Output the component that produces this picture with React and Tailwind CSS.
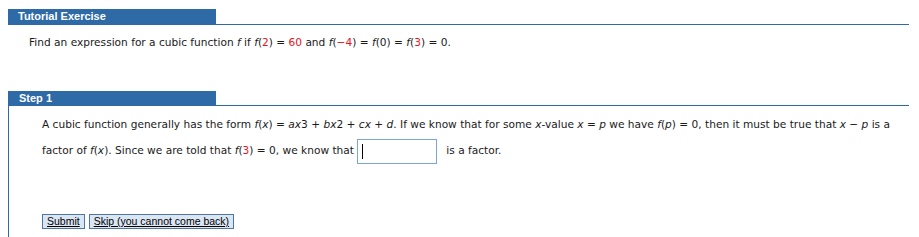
import React from "react";

function Red({ children }) {
  return <span className="text-[#e8141b]">{children}</span>;
}

function M({ children }) {
  return <i className="italic">{children}</i>;
}

export default function App() {
  return (
    <div className="w-[919px] h-[237px] bg-white text-[#1a1a1a] overflow-hidden font-['DejaVu_Sans',Verdana,sans-serif] text-[10.6px]">
      {/* Tutorial exercise */}
      <div className="pt-[9px] pl-[8px] pr-[10px]">
        <div className="flex border-b border-[#2e6aa6]">
          <div className="w-[208px] h-[15px] bg-[#2e6aa6] text-white font-bold text-[11px] leading-[15px] pl-[10px] font-['Liberation_Sans',Arial,sans-serif]">
            Tutorial Exercise
          </div>
        </div>
        <p className="pl-[21px] pt-[10px] leading-[14px]">
          Find an expression for a cubic function <M>f</M> if <M>f</M>(<Red>2</Red>) = <Red>60</Red> and{" "}
          <M>f</M>(<Red>−4</Red>) = <M>f</M>(0) = <M>f</M>(<Red>3</Red>) = 0.
        </p>
      </div>

      {/* Step 1 */}
      <div className="mt-[42px] ml-[8px] mr-[10px]">
        <div className="flex border-b border-[#2e6aa6]">
          <div className="w-[208px] h-[14px] bg-[#2e6aa6] text-white font-bold text-[11px] leading-[14px] pl-[11px] font-['Liberation_Sans',Arial,sans-serif]">
            Step 1
          </div>
        </div>
        <div className="border-l border-[#2e6aa6] pl-[33px] pt-[6px] pb-[20px]">
          <div className="h-[26px] flex items-center whitespace-pre">
            <span>
              A cubic function generally has the form <M>f</M>(<M>x</M>) = <M>ax</M>3 + <M>bx</M>2 + <M>cx</M> + <M>d</M>. If we know that for
              some <M>x</M>-value <M>x</M> = <M>p</M> we have <M>f</M>(<M>p</M>) = 0, then it must be true that <M>x</M> − <M>p</M> is a
            </span>
          </div>
          <div className="h-[26px] flex items-center">
            <span className="whitespace-pre">
              factor of <M>f</M>(<M>x</M>). Since we are told that <M>f</M>(<Red>3</Red>) = 0, we know that{" "}
            </span>
            <div className="w-[80px] h-[25px] border border-[#7ea6d3] bg-white flex items-center pl-[4px]">
              <span className="w-px h-[15px] bg-black" />
            </div>
            <span className="ml-[9px]">is a factor.</span>
          </div>
          <div className="flex gap-[4px] mt-[50px]">
            <button className="h-[15px] px-[4px] bg-[#dbe6f3] border border-[#4f76a6] text-[10.5px] leading-[13px] underline text-black font-['Liberation_Sans',Arial,sans-serif]">
              Submit
            </button>
            <button className="h-[15px] px-[4px] bg-[#dbe6f3] border border-[#4f76a6] text-[10.5px] leading-[13px] underline text-black font-['Liberation_Sans',Arial,sans-serif]">
              Skip (you cannot come back)
            </button>
          </div>
        </div>
      </div>
    </div>
  );
}
